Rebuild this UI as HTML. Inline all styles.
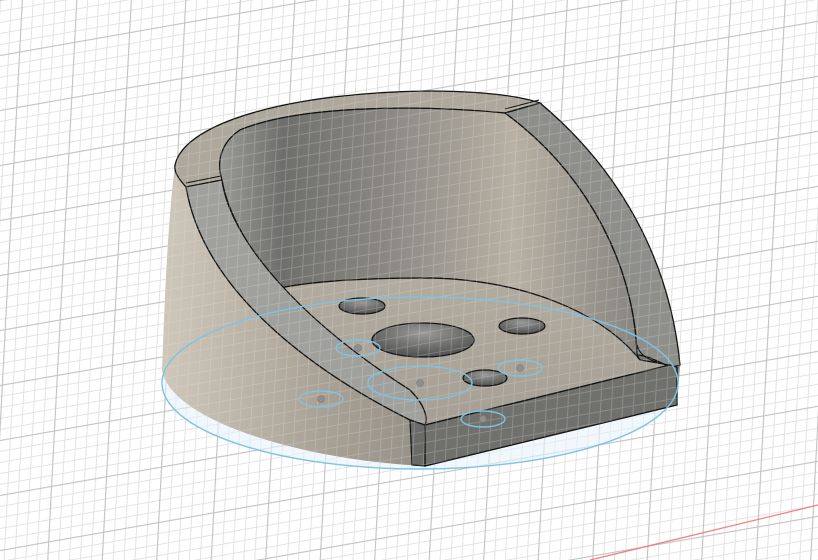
<!DOCTYPE html>
<html><head><meta charset="utf-8"><style>html,body{margin:0;padding:0;background:#fff}svg{display:block}</style></head><body>
<svg width="818" height="560" viewBox="0 0 818 560" xmlns="http://www.w3.org/2000/svg">
<defs>
<pattern id="minor" width="11" height="11" patternUnits="userSpaceOnUse" patternTransform="skewY(-10) skewX(-3)">
<path d="M0 0.5H11M0.5 0V11" stroke="#e2e2e2" stroke-width="1" fill="none"/>
</pattern>
<pattern id="major" width="55" height="55" patternUnits="userSpaceOnUse" patternTransform="skewY(-10) skewX(-3) translate(22,0)">
<path d="M0 0.5H55M0.5 0V55" stroke="#c4c4c4" stroke-width="1.2" fill="none"/>
</pattern>
<linearGradient id="outer" x1="0" x2="1" y1="0" y2="0">
<stop offset="0" stop-color="#cfc8ba"/><stop offset="0.3" stop-color="#aaa296"/><stop offset="0.6" stop-color="#8c8880"/><stop offset="1" stop-color="#76746f"/>
</linearGradient>
<linearGradient id="inner" x1="0" x2="1" y1="0" y2="0">
<stop offset="0" stop-color="#9a9a96"/><stop offset="0.15" stop-color="#6e6f6c"/><stop offset="0.4" stop-color="#8b8883"/><stop offset="0.7" stop-color="#b8b1a4"/><stop offset="1" stop-color="#85847f"/>
</linearGradient>
<linearGradient id="floor" x1="0" x2="0" y1="0" y2="1">
<stop offset="0" stop-color="#b2ab9f"/><stop offset="1" stop-color="#a59f95"/>
</linearGradient>
<radialGradient id="hole" cx="0.5" cy="0.3" r="0.7">
<stop offset="0" stop-color="#9a9a98"/><stop offset="1" stop-color="#4e4f4e"/>
</radialGradient>
</defs>
<rect width="818" height="560" fill="#fff"/>
<rect width="818" height="560" fill="url(#minor)"/>
<rect width="818" height="560" fill="url(#major)"/>
<line x1="590" y1="560" x2="818" y2="505" stroke="#f08080" stroke-width="1.3"/>
<ellipse cx="420" cy="383" rx="258" ry="86" fill="#e6f3fb" opacity="0.6"/>
<path d="M175,165 C185,120 300,92 430,91 C480,91 520,96 540,103 C620,170 670,260 680,365 L677,405 L425,466 C300,460 170,420 162,370 C165,290 168,220 175,165Z" fill="url(#outer)"/>
<path d="M175,165 C185,120 300,92 430,91 C480,91 520,96 540,103 L505,113 C420,105 300,105 240,130 C222,142 216,160 222,180 L186,187 C178,178 174,172 175,165Z" fill="#aea89c" stroke="#111" stroke-width="1.3"/>
<path d="M222,180 C216,160 222,142 240,130 C300,105 420,105 505,113 C590,175 635,270 637,355 L640,360 C600,310 520,280 430,278 C360,278 310,282 280,288 C250,250 228,215 222,180Z" fill="url(#inner)" stroke="#111" stroke-width="1.2"/>
<path d="M280,288 C310,282 360,278 430,278 C520,280 600,310 640,360 L670,365 L425,425 C390,405 340,360 300,315Z" fill="url(#floor)" stroke="#111" stroke-width="1.2"/>
<path d="M186,187 L222,180 C230,240 300,320 410,390 C425,405 428,418 425,425 L410,420 C330,380 205,300 186,187Z" fill="#a0a19d" stroke="#111" stroke-width="1.3"/>
<path d="M505,113 L540,103 C620,170 670,260 680,365 L670,367 C655,360 645,355 637,355 C635,270 590,175 505,113Z" fill="#8e8f8a" stroke="#111" stroke-width="1.3"/>
<path d="M637,345 C640,358 655,363 670,365" fill="none" stroke="#111" stroke-width="1"/>
<path d="M425,425 L670,365 L677,367 L677,405 L425,466Z" fill="#70716d" stroke="#111" stroke-width="1.3"/>
<path d="M410,420 L425,425 L425,466 L412,465Z" fill="#6a6b68" stroke="#111" stroke-width="1.2"/>
<line x1="186" y1="183" x2="221" y2="176" stroke="#111" stroke-width="1"/>
<line x1="505" y1="109" x2="539" y2="100" stroke="#111" stroke-width="1"/>
<ellipse cx="362" cy="306" rx="23" ry="8" fill="url(#hole)" stroke="#111" stroke-width="1.2"/>
<ellipse cx="423" cy="340" rx="51" ry="17" fill="url(#hole)" stroke="#111" stroke-width="1.2"/>
<ellipse cx="522" cy="326" rx="23" ry="8" fill="url(#hole)" stroke="#111" stroke-width="1.2"/>
<ellipse cx="485" cy="378" rx="22" ry="8" fill="url(#hole)" stroke="#111" stroke-width="1.2"/>
<path d="M175,165 C185,120 300,92 430,91 C480,91 520,96 540,103 C620,170 670,260 680,365 L677,405 L425,466 C300,460 170,420 162,370 C165,290 168,220 175,165Z" fill="url(#minor)" opacity="0.25"/>
<g fill="none" stroke="#7ec3e6" stroke-width="1.4">
<ellipse cx="420" cy="383" rx="258" ry="86"/>
<ellipse cx="358" cy="348" rx="22" ry="8"/>
<ellipse cx="420" cy="383" rx="52" ry="17"/>
<ellipse cx="520" cy="368" rx="22" ry="8"/>
<ellipse cx="321" cy="399" rx="22" ry="8"/>
<ellipse cx="483" cy="419" rx="22" ry="8"/>
</g>
<g fill="#8f8f8f" stroke="#777" stroke-width="0.6">
<circle cx="358" cy="348" r="3.5"/><circle cx="420" cy="383" r="3.5"/><circle cx="520" cy="368" r="3.5"/><circle cx="321" cy="399" r="3.5"/><circle cx="483" cy="419" r="3.5"/>
</g>
</svg>
</body></html>
